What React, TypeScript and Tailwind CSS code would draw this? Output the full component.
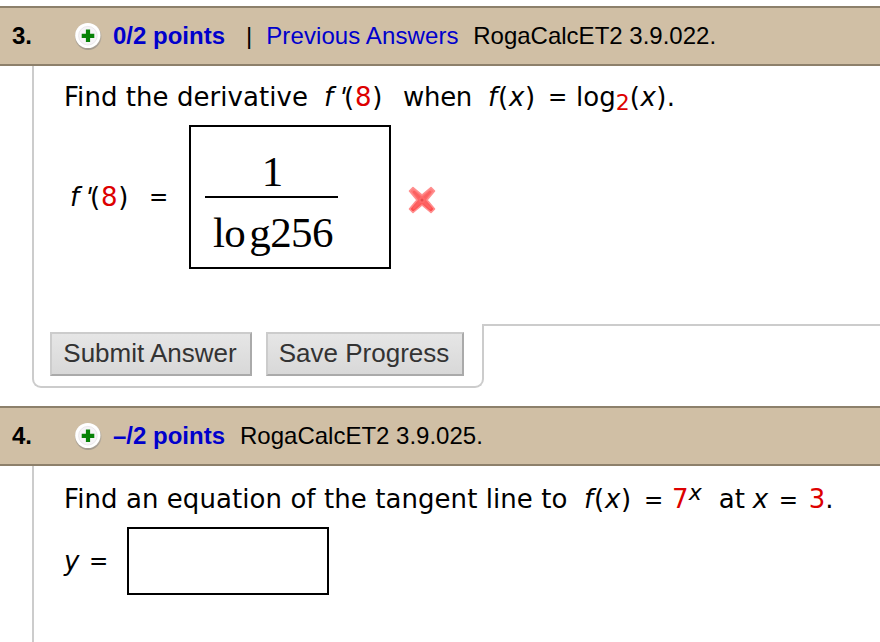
import React from 'react';

const ExpandIcon = () => (
  <svg width="30" height="30" viewBox="0 0 30 30" className="shrink-0">
    <defs>
      <linearGradient id="rim" x1="0" y1="0" x2="0" y2="1">
        <stop offset="0" stopColor="#c9c4bc" />
        <stop offset="1" stopColor="#8f8a83" />
      </linearGradient>
    </defs>
    <circle cx="15.2" cy="15.6" r="13.3" fill="url(#rim)" opacity="0.7" />
    <circle cx="14.8" cy="14.5" r="12.6" fill="#ffffff" />
    <circle cx="14.9" cy="14.7" r="9.3" fill="#f6f4f7" stroke="#eae8ea" />
    <path d="M12.9 8.6h4.2v4.1h4.2v4.2h-4.2v4.1h-4.2v-4.1H8.7v-4.2h4.2z" fill="#078207" />
  </svg>
);

const WrongIcon = () => (
  <svg width="30" height="30" viewBox="0 0 30 30" className="shrink-0">
    <defs>
      <linearGradient id="cross" x1="0" y1="0" x2="0" y2="1">
        <stop offset="0" stopColor="#ff8484" />
        <stop offset="1" stopColor="#ff4545" />
      </linearGradient>
    </defs>
    <path
      d="M6 2.5 L15 10 L24 2.5 L27.5 6 L20 15 L27.5 24 L24 27.5 L15 20 L6 27.5 L2.5 24 L10 15 L2.5 6 Z"
      fill="url(#cross)"
      stroke="#ff8f8f"
      strokeWidth="1.6"
      strokeLinejoin="round"
    />
    <path d="M7 7l16 16M23 7L7 23" stroke="#fb6262" strokeWidth="2.5" strokeLinecap="round" />
    <circle cx="15" cy="15" r="3" fill="#ff6a6a" />
    <circle cx="15" cy="15" r="1.5" fill="#e84c4c" />
  </svg>
);

const QuestionHeader = ({ number, points, children }: { number: string; points: string; children: React.ReactNode }) => (
  <div className="flex h-[60px] items-center border-y-2 border-[#8d806b] bg-[#d0bfa5] pl-3 text-2xl whitespace-pre">
    <span className="w-[61px] font-bold">{number}</span>
    <ExpandIcon />
    <span className="ml-[10px] w-[112px] font-bold text-[#0000cc]">{points}</span>
    {children}
  </div>
);

const Red = ({ children }: { children: React.ReactNode }) => (
  <span className="text-[#dd0000]">{children}</span>
);

const Equals = ({ width }: { width: string }) => (
  <span className={`${width} shrink-0 pt-px text-[23px]`}>=</span>
);

const FPrimeOfEight = () => (
  <span className="inline-flex">
    <i className="w-[17px]">f</i>
    <i className="w-[3px] -translate-x-0.5 -skew-x-12">'</i>
    <span className="tracking-[0.8px]">(<Red>8</Red>)</span>
  </span>
);

const FOfX = () => (
  <span className="w-[60px] shrink-0 tracking-[0.8px]"><i>f</i>(<i>x</i>)</span>
);

const ActionButton = ({ children, width }: { children: React.ReactNode; width: string }) => (
  <button
    className={`${width} h-11 border-2 border-t-[#cccccc] border-l-[#cccccc] border-r-[#aaaaaa] border-b-[#aaaaaa] bg-linear-to-b from-[#e6e6e6] to-[#d8d8d8] pr-0.5 pb-0.5 text-[26px] leading-none whitespace-nowrap text-[#333333]`}
  >
    {children}
  </button>
);

export default function App() {
  return (
    <div className="h-[642px] w-[880px] overflow-hidden bg-white pt-1.5 font-['Liberation_Sans',Arial,sans-serif] text-black">
      <QuestionHeader number="3." points="0/2 points">
        <span className="ml-[21px]">|</span>
        <span className="ml-[14px] w-[207px] tracking-[0.1px] text-[#0000cc]">Previous Answers</span>
        <span>RogaCalcET2 3.9.022.</span>
      </QuestionHeader>

      <div className="ml-8 flex h-[322px]">
        <div className="flex w-[452px] flex-col">
          <div className="h-[258px] border-l-2 border-[#cccccc] pl-[30px] font-['DejaVu_Sans',Verdana,sans-serif] text-[26px] tracking-[0.05px] whitespace-pre">
            <div className="flex h-[59px] items-center pt-[3px]">
              <span className="w-[260px] shrink-0">Find the derivative</span>
              <span className="w-[79px] shrink-0"><FPrimeOfEight /></span>
              <span className="w-[85px] shrink-0 tracking-[-0.3px]">when</span>
              <FOfX />
              <Equals width="w-[28px]" />
              <span>log</span>
              <span className="translate-y-[5px] text-[22px]"><Red>2</Red></span>
              <span className="tracking-[0.4px]">(<i>x</i>).</span>
            </div>
            <div className="flex h-36 items-center pl-[6px]">
              <span className="w-[79px] shrink-0"><FPrimeOfEight /></span>
              <Equals width="w-[40px]" />
              <div className="h-36 w-[202px] shrink-0 border-2 border-black pt-[22px] pl-3.5 font-['Liberation_Serif',serif] text-[43px] leading-[46px] tracking-normal">
                <div className="h-[49px] w-[133px] border-b-2 border-black pl-0.5 text-center">1</div>
                <div className="flex pt-3 pl-2 tracking-[-0.6px]">
                  <span>lo</span>
                  <span className="ml-1">g256</span>
                </div>
              </div>
              <div className="ml-4 pt-1.5"><WrongIcon /></div>
            </div>
          </div>
          <div className="flex h-16 gap-3.5 rounded-b-[9px] border-x-2 border-b-2 border-[#cccccc] pt-2 pl-4">
            <ActionButton width="w-[202px]">Submit Answer</ActionButton>
            <ActionButton width="w-[198px]">Save Progress</ActionButton>
          </div>
        </div>
        <div className="-ml-0.5 mt-[258px] h-0.5 flex-1 bg-[#cccccc]" />
      </div>

      <div className="mt-[18px]">
        <QuestionHeader number="4." points="–/2 points">
          <span className="ml-[15px]">RogaCalcET2 3.9.025.</span>
        </QuestionHeader>
      </div>

      <div className="ml-8 h-[176px] border-l-2 border-[#cccccc] pl-[30px] font-['DejaVu_Sans',Verdana,sans-serif] text-[26px] tracking-[0.07px] whitespace-pre">
        <div className="flex h-[61px] items-center pt-1.5">
          <span className="w-[520px] shrink-0">Find an equation of the tangent line to</span>
          <FOfX />
          <Equals width="w-[28px]" />
          <Red>7</Red>
          <i className="w-[30px] -translate-y-[7px] text-[22px]">x</i>
          <span className="w-[34px] shrink-0">at</span>
          <i className="w-[26px] shrink-0">x</i>
          <Equals width="w-[30px]" />
          <Red>3</Red>.
        </div>
        <div className="flex h-[68px] items-center">
          <i className="w-[25px]">y</i>
          <Equals width="w-[38px]" />
          <input className="h-[68px] w-[202px] border-2 border-black px-2 outline-none" />
        </div>
      </div>
    </div>
  );
}
